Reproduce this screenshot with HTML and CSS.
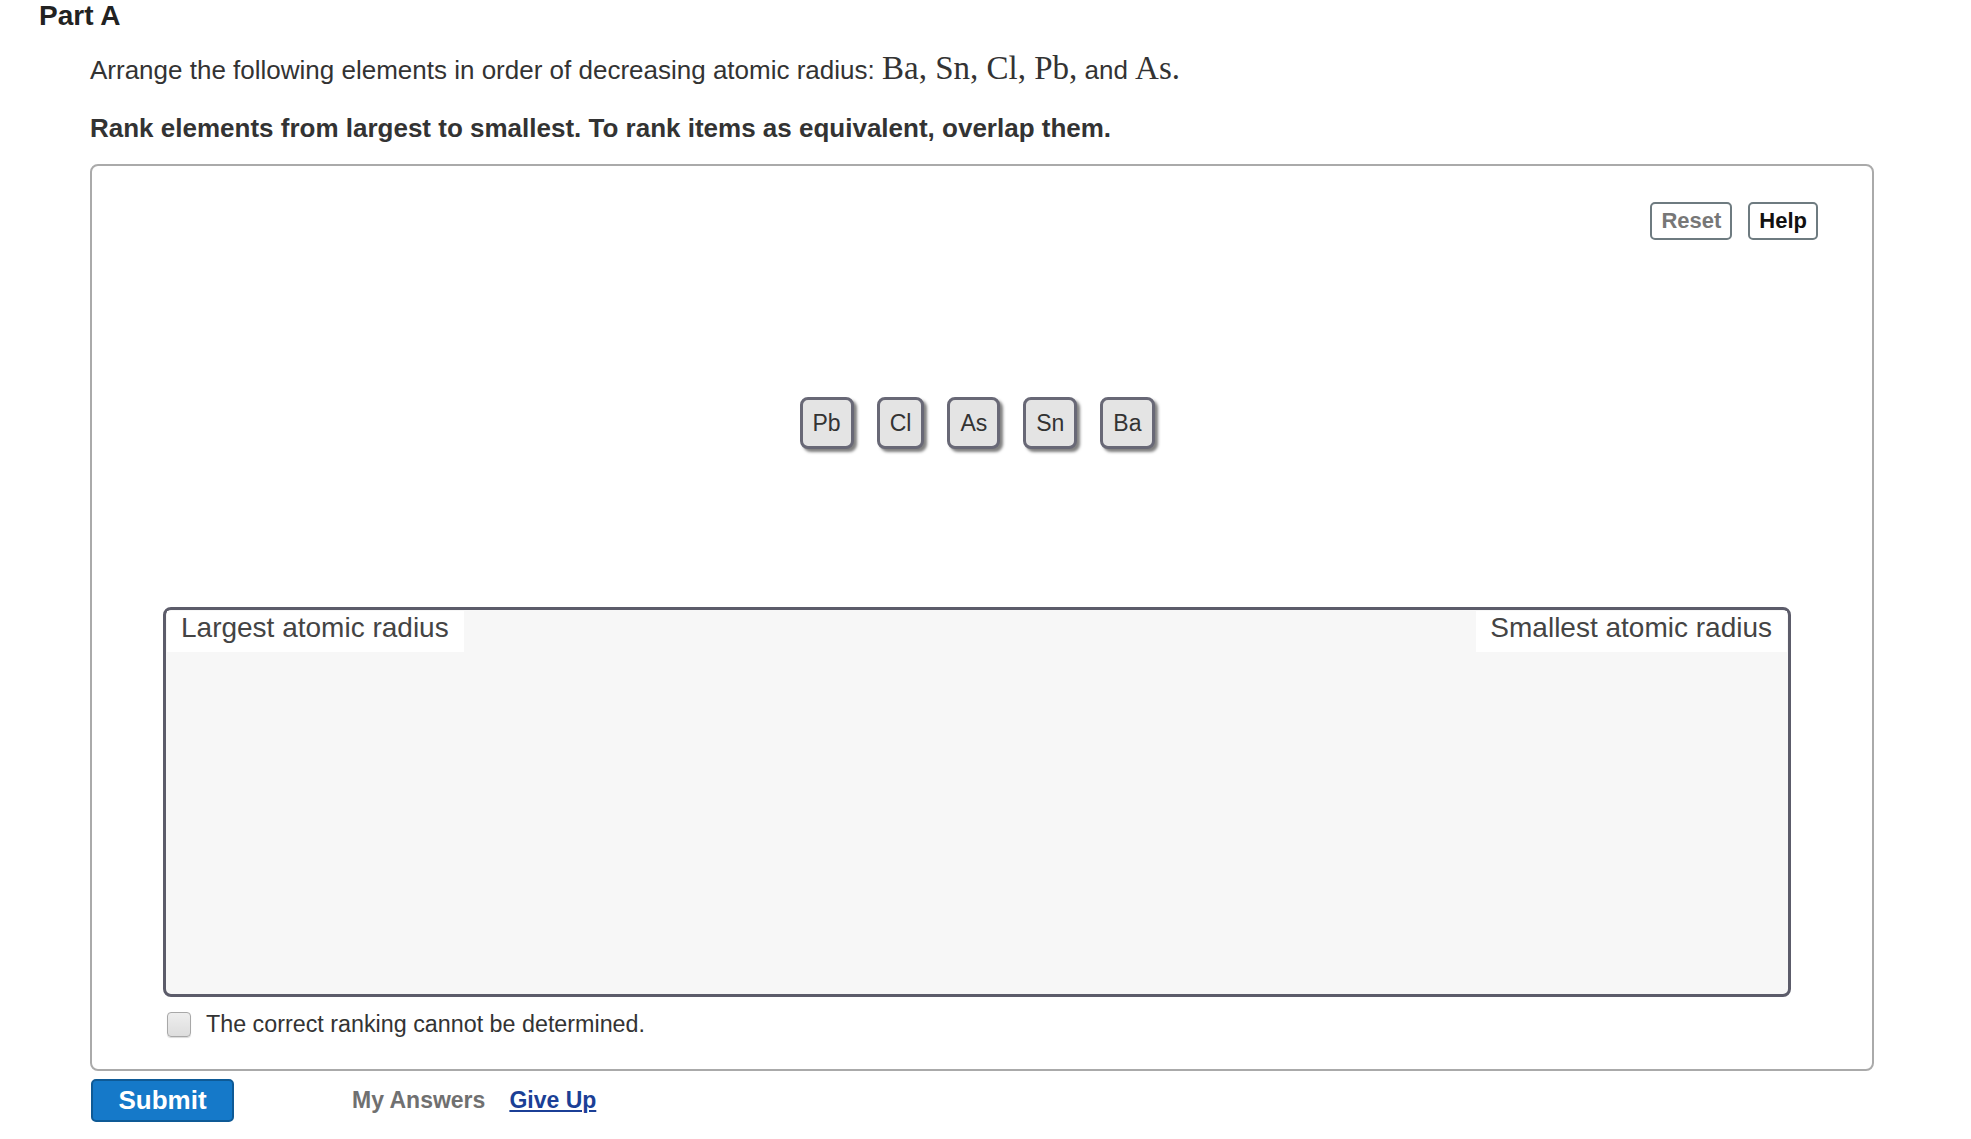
FILE: index.html
```html
<!DOCTYPE html>
<html lang="en">
<head>
<meta charset="utf-8">
<title>Part A</title>
<link rel="stylesheet" href="styles.css">
</head>
<body>
<h2 class="part-title">Part A</h2>
<div class="content">
  <p class="question">Arrange the following elements in order of decreasing atomic radius: <span class="math">Ba, Sn, Cl, Pb,</span> and <span class="math">As.</span></p>
  <p class="instruction">Rank elements from largest to smallest. To rank items as equivalent, overlap them.</p>
  <div class="panel">
    <div class="toolbar">
      <button class="tool-btn tool-reset" type="button">Reset</button>
      <button class="tool-btn tool-help" type="button">Help</button>
    </div>
    <div class="tiles">
      <div class="tile">Pb</div>
      <div class="tile">Cl</div>
      <div class="tile">As</div>
      <div class="tile">Sn</div>
      <div class="tile">Ba</div>
    </div>
    <div class="ranking">
      <div class="rank-labels">
        <span class="rank-label">Largest atomic radius</span>
        <span class="rank-label">Smallest atomic radius</span>
      </div>
    </div>
    <label class="cannot">
      <span class="checkbox"></span>
      <span class="cannot-text">The correct ranking cannot be determined.</span>
    </label>
  </div>
  <div class="actions">
    <button class="submit" type="button">Submit</button>
    <span class="my-answers">My Answers</span>
    <a class="give-up" href="#">Give Up</a>
  </div>
</div>
</body>
</html>
```

FILE: styles.css
```css
html, body {
  margin: 0;
  padding: 0;
  background: #ffffff;
}

body {
  font-family: "Liberation Sans", Arial, sans-serif;
  color: #333333;
}

.part-title {
  margin: 0 0 0 39px;
  font-size: 28px;
  line-height: 32px;
  font-weight: bold;
  color: #222222;
}

.content {
  margin-left: 90px;
  width: 1784px;
}

.question {
  margin: 20px 0 0 0;
  font-size: 26px;
  line-height: 36px;
  color: #333333;
}

.math {
  font-family: "Liberation Serif", "Times New Roman", serif;
  font-size: 33px;
  line-height: 1;
  color: #333333;
}

.instruction {
  margin: 22px 0 0 0;
  font-size: 26px;
  line-height: 36px;
  font-weight: bold;
  color: #333333;
}

.panel {
  box-sizing: border-box;
  margin-top: 18px;
  width: 1784px;
  height: 907px;
  border: 2px solid #aaaaaa;
  border-radius: 8px;
  padding-top: 36px;
  display: flex;
  flex-direction: column;
}

.toolbar {
  display: flex;
  justify-content: flex-end;
  gap: 16px;
  padding-right: 54px;
}

.tool-btn {
  box-sizing: border-box;
  height: 38px;
  padding: 0 9px;
  border: 2px solid #6e7b80;
  border-radius: 5px;
  background: #ffffff;
  font-family: "Liberation Sans", Arial, sans-serif;
  font-size: 22px;
  font-weight: bold;
  line-height: 34px;
}

.tool-reset {
  color: #777777;
}

.tool-help {
  color: #111111;
}

.tiles {
  display: flex;
  justify-content: center;
  gap: 23px;
  margin-top: 157px;
  padding-right: 10px;
}

.tile {
  box-sizing: border-box;
  height: 52px;
  padding: 0 10px;
  border: 3px solid #686876;
  border-radius: 8px;
  background: #e4e4e4;
  box-shadow: 3px 3px 3px rgba(0, 0, 0, 0.5);
  font-size: 23px;
  line-height: 46px;
  color: #333333;
}

.ranking {
  box-sizing: border-box;
  margin: 158px 0 0 71px;
  width: 1628px;
  height: 390px;
  border: 3px solid #5c5c6a;
  border-radius: 8px;
  background: #f7f7f7;
  padding: 1px;
}

.rank-labels {
  display: flex;
  justify-content: space-between;
}

.rank-label {
  background: #ffffff;
  font-size: 28px;
  line-height: 34px;
  padding: 0 15px 7px 14px;
  color: #444444;
}

.cannot {
  display: flex;
  align-items: center;
  gap: 15px;
  margin: 12px 0 0 75px;
}

.checkbox {
  box-sizing: border-box;
  width: 24px;
  height: 25px;
  border: 1px solid #a8a8a8;
  border-radius: 4px;
  background: linear-gradient(#eeeeee, #dddddd);
  box-shadow: 0 1px 1px rgba(0, 0, 0, 0.15);
}

.cannot-text {
  font-size: 23.3px;
  line-height: 30px;
  color: #333333;
}

.actions {
  display: flex;
  align-items: center;
  margin-top: 8px;
}

.submit {
  box-sizing: border-box;
  width: 143px;
  height: 43px;
  margin-left: 1px;
  border: 2px solid #0e5a96;
  border-radius: 5px;
  background: #1579c9;
  color: #ffffff;
  font-family: "Liberation Sans", Arial, sans-serif;
  font-size: 26px;
  font-weight: bold;
  line-height: 37px;
  padding: 0;
}

.my-answers {
  margin-left: 118px;
  font-size: 23px;
  font-weight: bold;
  color: #707070;
}

.give-up {
  margin-left: 24px;
  font-size: 23px;
  font-weight: bold;
  color: #1b3f96;
  text-decoration: underline;
}
```
